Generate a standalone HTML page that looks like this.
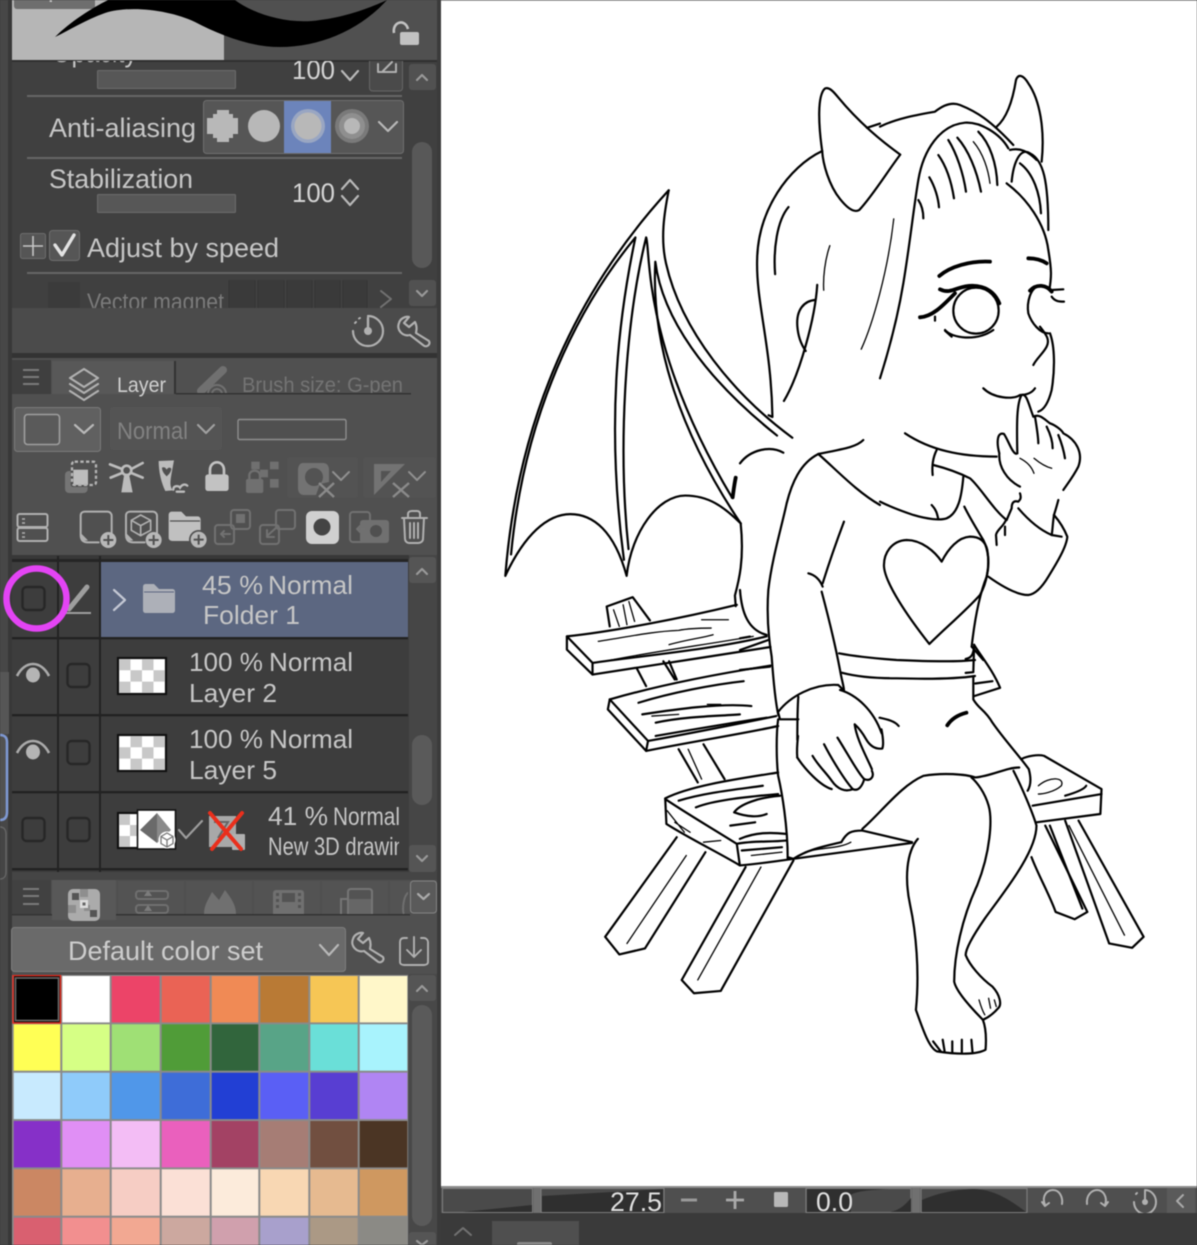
<!DOCTYPE html>
<html><head><meta charset="utf-8"><style>
html,body{margin:0;padding:0;background:#3c3c3c;overflow:hidden}
svg{display:block;position:absolute;left:0;top:0;filter:blur(.55px)}
text{font-family:"Liberation Sans","DejaVu Sans",sans-serif;fill:#c6c6c6;font-size:27px}
.ln path,.ln ellipse{fill:none;stroke:#000;stroke-width:2.2;vector-effect:non-scaling-stroke;stroke-linecap:round;stroke-linejoin:round}
.ln .t{stroke-width:1.3}
.ln .k{stroke-width:3.8}
.ic{fill:none;stroke:#b0b0b0;stroke-width:2;stroke-linecap:round;stroke-linejoin:round}
.dm{fill:none;stroke:#717171;stroke-width:2;stroke-linecap:round;stroke-linejoin:round}
.ch{fill:none;stroke:#b8b8b8;stroke-width:2.2;stroke-linecap:round;stroke-linejoin:round}
.cb{fill:none;stroke:#272727;stroke-width:2.4}
</style></head><body>
<svg width="1197" height="1245" viewBox="0 0 1197 1245" xmlns="http://www.w3.org/2000/svg">
<defs>
<clipPath id="cTop"><rect x="12" y="61" width="425" height="247"/></clipPath>
<clipPath id="cMag"><rect x="40" y="280" width="365" height="28"/></clipPath>
<clipPath id="c3d"><rect x="260" y="830" width="139" height="38"/></clipPath>
<clipPath id="cBar"><rect x="441" y="1189" width="756" height="24"/></clipPath>
<clipPath id="cTab"><rect x="176" y="361" width="235" height="32"/></clipPath>
<clipPath id="cTabs"><rect x="118" y="880" width="290" height="34"/></clipPath>
<clipPath id="cPal"><rect x="12" y="975" width="396" height="270"/></clipPath>
<g id="wr"><path d="M409,317 L404,323 L409,327 L415,322 C418,328 416,331 416,333 L429,341 C431,345 426,348 423,345 L410,335 C403,337 396,330 399,323 C400,319 405,316 409,317Z"/></g>
</defs>

<!-- base -->
<rect width="1197" height="1245" fill="#3b3b3b"/>
<rect x="0" y="0" width="9" height="1245" fill="#474747"/>
<rect x="8" y="0" width="4" height="1245" fill="#383838"/>
<rect x="0" y="672" width="9" height="62" fill="#565656"/>
<path d="M0,735 C5,735 7,738 7,742 L7,812 C7,817 5,820 0,820" fill="#525252" stroke="#7e98d2" stroke-width="2.6"/>
<path d="M0,827 C4,827 6,830 6,834 L6,872 C6,876 4,879 0,879" fill="#454545" stroke="#676767" stroke-width="1.4"/>

<!-- brush preview -->
<rect x="12" y="0" width="425" height="60" fill="#505050"/>
<rect x="12" y="0" width="212" height="60" fill="#b6b6b6"/>
<rect x="14" y="-8" width="81" height="17" rx="3" fill="#6e6e6e"/>
<text x="20" y="-3" style="font-size:24px" textLength="70" lengthAdjust="spacingAndGlyphs">G-pen</text>
<path d="M55,37 C70,22 92,8 108,0 L235,0 C255,15 290,25 320,20 C345,17 370,8 387,0 C360,30 320,47 280,47 C250,47 220,35 195,22 C170,10 130,5 105,13 C85,20 70,30 55,37Z" fill="#000"/>
<path d="M394,33 C392,22 405,18 408,29" fill="none" stroke="#c2c2c2" stroke-width="2.6"/>
<rect x="400" y="32" width="19" height="13" rx="2" fill="#c2c2c2"/>
<rect x="12" y="60" width="425" height="2" fill="#303030"/>

<!-- tool property -->
<rect x="12" y="62" width="425" height="246" fill="#404040"/>
<g clip-path="url(#cTop)">
<text x="52" y="62" textLength="85" lengthAdjust="spacingAndGlyphs">Opacity</text>
<rect x="97.5" y="70.5" width="138" height="18" rx="1" fill="#575757" stroke="#6b6b6b"/>
<text x="292" y="79" textLength="43" lengthAdjust="spacingAndGlyphs" style="fill:#d4d4d4">100</text>
<path class="ch" d="M342,71 L350,80 L358,71"/>
<rect x="369.5" y="50" width="33" height="41" rx="3" fill="#4a4a4a" stroke="#666"/>
<path class="ic" d="M378,64 L378,72 L396,72 L396,64 M383,71 L392,62"/>
</g>
<rect x="409" y="64" width="27" height="26" rx="3" fill="#515151"/>
<path class="ch" d="M417,80 L422,75 L427,80" style="stroke:#999"/>
<rect x="27" y="95" width="375" height="2" fill="#666"/>

<text x="49" y="137" textLength="147" lengthAdjust="spacingAndGlyphs">Anti-aliasing</text>
<rect x="203.5" y="100.5" width="200" height="53" rx="3" fill="#565656" stroke="#6e6e6e"/>
<rect x="284" y="101" width="47" height="52" fill="#6c84bb"/>
<path d="M217,110 h12 v4 h4 v4 h5 v16 h-5 v4 h-4 v4 h-12 v-4 h-4 v-4 h-6 v-16 h6 v-4 h4z" fill="#b8b8b8"/>
<circle cx="264" cy="126" r="16" fill="#b8b8b8"/>
<circle cx="308" cy="126" r="17" fill="#99a6c2"/>
<circle cx="308" cy="126" r="13.5" fill="#b8b8b8"/>
<circle cx="352" cy="126" r="17" fill="#7a7a7a"/>
<circle cx="352" cy="126" r="13" fill="#8f8f8f"/>
<circle cx="352" cy="126" r="8" fill="#b8b8b8"/>
<path class="ch" d="M379,122 L388,131 L397,122"/>
<rect x="27" y="157" width="375" height="2" fill="#666"/>

<text x="49" y="188" textLength="144" lengthAdjust="spacingAndGlyphs">Stabilization</text>
<rect x="97.5" y="194.5" width="138" height="18" rx="1" fill="#575757" stroke="#6b6b6b"/>
<text x="292" y="202" textLength="43" lengthAdjust="spacingAndGlyphs" style="fill:#d4d4d4">100</text>
<path class="ch" d="M342,189 L350,180 L358,189 M342,196 L350,205 L358,196"/>

<rect x="20.5" y="233.5" width="25" height="25" rx="2" fill="#555" stroke="#6d6d6d"/>
<path d="M23,246 H43 M33,236 V256" stroke="#c6c6c6" stroke-width="1.6" fill="none"/>
<rect x="49.5" y="230.5" width="30" height="30" rx="3" fill="#565656" stroke="#6d6d6d"/>
<path d="M55,245 L62,255 L74,235" fill="none" stroke="#e2e2e2" stroke-width="3.4" stroke-linecap="round" stroke-linejoin="round"/>
<text x="87" y="257" textLength="192" lengthAdjust="spacingAndGlyphs">Adjust by speed</text>
<rect x="27" y="272" width="375" height="2" fill="#666"/>

<g clip-path="url(#cMag)">
<rect x="48" y="282" width="32" height="30" fill="#3b3b3b"/>
<text x="87" y="310" textLength="137" lengthAdjust="spacingAndGlyphs" style="fill:#7b7b7b;font-size:24px">Vector magnet</text>
<g fill="#3a3a3a" stroke="#353535"><rect x="229" y="279" width="26" height="32"/><rect x="258" y="279" width="26" height="32"/><rect x="287" y="279" width="25" height="32"/><rect x="315" y="279" width="25" height="32"/><rect x="343" y="279" width="24" height="32"/></g>
</g>
<path class="dm" d="M381,291 L391,299 L381,307"/>
<rect x="412" y="142" width="20" height="126" rx="10" fill="#585858"/>
<rect x="409" y="280" width="27" height="26" rx="3" fill="#515151"/>
<path class="ch" d="M417,291 L422,296 L427,291" style="stroke:#999"/>

<rect x="12" y="308" width="425" height="45" fill="#4b4b4b"/>
<path class="ic" d="M368,316 A15,15 0 1 1 353,331" style="stroke-width:2.2"/>
<path d="M355,323 L356,322 M359,318.5 L360,318" stroke="#b0b0b0" stroke-width="2" stroke-linecap="round"/>
<circle cx="368" cy="331" r="4" fill="#b0b0b0"/><path class="ic" d="M368,331 L368,318" style="stroke-width:2.4"/>
<use href="#wr" class="ic" style="stroke-width:2.2"/>
<rect x="12" y="353" width="425" height="5" fill="#333"/>

<!-- layer panel -->
<rect x="12" y="358" width="425" height="197" fill="#505050"/>
<rect x="12" y="360" width="39" height="34" fill="#3f3f3f"/>
<path d="M23,370 H39 M23,377 H39 M23,384 H39" stroke="#7a7a7a" stroke-width="2"/>
<rect x="52" y="361" width="122" height="33" fill="#585858"/>
<rect x="176" y="361" width="235" height="32" fill="#505050"/>
<rect x="174" y="361" width="2" height="33" fill="#333"/>
<rect x="176" y="393" width="235" height="1.5" fill="#333"/>
<path class="ic" d="M84,369 L98,378 L84,387 L70,378Z M70,384 L84,393 L98,384 M70,391 L84,400 L98,391" style="stroke-width:2.2"/>
<text x="117" y="392" textLength="49" lengthAdjust="spacingAndGlyphs" style="font-size:21px;fill:#d0d0d0">Layer</text>
<g clip-path="url(#cTab)">
<path d="M201,391 L223,370" stroke="#707070" stroke-width="8" stroke-linecap="round"/>
<circle cx="217" cy="394" r="9" fill="none" stroke="#707070" stroke-width="2"/><circle cx="217" cy="394" r="5" fill="none" stroke="#707070" stroke-width="2"/>
<text x="242" y="392" textLength="161" lengthAdjust="spacingAndGlyphs" style="font-size:21px;fill:#747474">Brush size: G-pen</text>
</g>

<rect x="14.5" y="407.5" width="86" height="44" rx="3" fill="#606060" stroke="#7a7a7a"/>
<rect x="24.5" y="414.5" width="35" height="30" rx="3" fill="#5a5a5a" stroke="#9e9e9e" stroke-width="1.6"/>
<path class="ch" d="M75,425 L84,433 L93,425"/>
<rect x="110" y="407" width="112" height="43" rx="3" fill="#545454"/>
<text x="117" y="439" textLength="71" lengthAdjust="spacingAndGlyphs" style="font-size:24px;fill:#828282">Normal</text>
<path class="ch" d="M198,425 L206,433 L214,425" style="stroke:#a0a0a0"/>
<rect x="238" y="419.5" width="108" height="20" rx="1.5" fill="none" stroke="#8e8e8e" stroke-width="1.4"/>

<!-- row 1 icons (frame: 60,455 at 1/3) -->
<g transform="translate(60,455) scale(.3333)">
<rect x="15" y="48" width="68" height="66" rx="12" fill="#757575"/>
<rect x="32" y="30" width="70" height="66" rx="8" fill="#505050"/>
<rect x="40" y="44" width="44" height="46" fill="#bdbdbd"/>
<rect x="36" y="20" width="72" height="70" rx="8" fill="none" stroke="#b4b4b4" stroke-width="7" stroke-dasharray="10 7"/>
<path d="M184,112 L192,62 L208,62 L218,112Z" fill="#bcbcbc"/>
<circle cx="200" cy="46" r="14" fill="none" stroke="#bcbcbc" stroke-width="8"/>
<path d="M150,28 L186,42 M152,68 L186,54 M248,24 L214,42 M248,68 L214,54" stroke="#bcbcbc" stroke-width="8" stroke-linecap="round"/>
<path d="M296,18 L342,16 L334,60 C330,84 330,94 338,106 L316,108 C304,84 296,50 296,18Z" fill="#bcbcbc"/>
<path d="M306,38 C314,34 318,40 320,44 C324,36 332,36 334,42 C332,54 326,58 320,64 C314,58 306,50 306,38Z" fill="#505050"/>
<path d="M340,104 C340,90 356,92 360,98 C366,88 376,86 382,92 M350,110 L372,110" fill="none" stroke="#bcbcbc" stroke-width="7" stroke-linecap="round"/>
<rect x="436" y="58" width="70" height="50" rx="8" fill="#c2c2c2"/>
<path d="M450,60 V46 C450,14 492,14 492,46 V60" fill="none" stroke="#c2c2c2" stroke-width="8"/>
<g fill="#707070"><rect x="574" y="20" width="25" height="23"/><rect x="600" y="44" width="24" height="23"/><rect x="630" y="20" width="26" height="23"/><rect x="630" y="72" width="26" height="26"/><rect x="558" y="72" width="52" height="42" rx="6"/></g>
<path d="M568,74 V62 C568,42 600,42 600,62 V74" fill="none" stroke="#707070" stroke-width="7"/>
</g>
<rect x="287" y="457" width="71" height="41" rx="3" fill="#535353"/>
<rect x="363" y="457" width="73" height="41" rx="3" fill="#535353"/>
<path d="M303,463 H323 C327,463 329,466 329,470 V482 L320,484 L316,495 H304 C300,495 298,492 298,488 V470 C298,466 300,463 303,463Z" fill="#737373"/><circle cx="314" cy="477" r="9" fill="#535353"/>
<path d="M319,483 L334,497 M334,483 L319,497" stroke="#8a8a8a" stroke-width="2.4" fill="none"/>
<path class="dm" d="M333,472 L341,480 L349,472" style="stroke:#8f8f8f"/>
<path d="M374,464 L405,464 L374,495Z" fill="#737373"/><path d="M381,471 L391,471 L381,482Z" fill="#535353"/>
<path d="M393,483 L409,497 M409,483 L393,497" stroke="#8a8a8a" stroke-width="2.4" fill="none"/>
<path class="dm" d="M409,472 L417,480 L425,472" style="stroke:#8f8f8f"/>

<!-- row 2 icons -->
<rect x="17.5" y="514" width="30" height="13" rx="2" class="ic"/><rect x="17.5" y="528" width="30" height="13" rx="2" class="ic"/>
<path d="M22,519 H25 M22,523 H25 M22,533 H25 M22,537 H25" stroke="#b0b0b0" stroke-width="1.6"/>
<g transform="translate(60,455) scale(.3333)">
<path class="ic" style="stroke-width:6" d="M62,240 V182 C62,174 68,170 74,170 H142 C150,170 155,176 155,182 V236 M62,240 C62,256 70,262 84,262 H116"/>
<path d="M64,236 L84,256 L64,258Z" fill="#b0b0b0"/>
<circle cx="145" cy="255" r="24" fill="#b8b8b8"/><path d="M130,255 H160 M145,240 V270" stroke="#505050" stroke-width="6"/>
<path class="ic" style="stroke-width:6" d="M198,240 V182 C198,174 204,170 210,170 H278 C286,170 291,176 291,182 V236 M198,240 C198,256 206,262 220,262 H254"/>
<path d="M200,236 L220,256 L200,258Z" fill="#b0b0b0"/>
<path class="ic" style="stroke-width:5" d="M242,180 L272,196 L272,226 L242,242 L214,226 L214,196Z M214,196 L242,212 L272,196 M242,212 V242"/>
<circle cx="281" cy="255" r="24" fill="#b8b8b8"/><path d="M266,255 H296 M281,240 V270" stroke="#505050" stroke-width="6"/>
<path d="M326,180 C326,174 330,170 336,170 H364 L378,184 H412 C418,184 422,188 422,194 V258 H338 C330,258 326,254 326,248Z" fill="#c0c0c0"/>
<path d="M330,198 H420" stroke="#505050" stroke-width="4"/>
<circle cx="416" cy="254" r="29" fill="#505050"/><circle cx="416" cy="254" r="24" fill="#b8b8b8"/><path d="M401,254 H431 M416,239 V269" stroke="#505050" stroke-width="6"/>
</g>
<rect x="231" y="510" width="19" height="19" rx="3" class="dm"/><rect x="236" y="514" width="9" height="9" fill="#717171"/>
<rect x="215" y="525" width="19" height="19" rx="3" class="dm"/><path class="dm" d="M230,534 H222 M224,531 L221,534 L224,537"/>
<rect x="276" y="510" width="19" height="19" rx="3" class="dm"/>
<rect x="260" y="525" width="19" height="19" rx="3" class="dm"/><path class="dm" d="M277,527 L267,536 M267,530 V537 H274"/>
<rect x="306" y="511" width="33" height="33" rx="6" fill="#d0d0d0"/><circle cx="322" cy="527" r="8.5" fill="#444"/>
<rect x="350" y="512" width="20" height="30" rx="3" class="dm"/><rect x="360" y="520" width="29" height="23" rx="3" fill="#707070"/><circle cx="376" cy="531" r="6" fill="#505050"/><path class="dm" d="M365,529 H357 M360,526 L357,529 L360,532"/>
<path class="ic" d="M402,518 H427 M408,518 V514 C408,512 410,511 412,511 H417 C419,511 420,512 420,514 V518 M404,518 L405,539 C405,541 407,543 409,543 H418 C421,543 423,541 423,539 L424,518 M410,523 V538 M414,523 V538 M418,523 V538"/>
<rect x="12" y="555" width="425" height="5" fill="#383838"/>

<!-- layer list -->
<rect x="12" y="560" width="397" height="310" fill="#3d3d3d"/>
<rect x="409" y="555" width="28" height="318" fill="#464646"/>
<rect x="101" y="562" width="307" height="75" fill="#5c6781"/>
<rect x="12" y="559" width="396" height="3" fill="#252525"/>
<rect x="12" y="637" width="396" height="2.4" fill="#232323"/>
<rect x="12" y="714" width="396" height="2.4" fill="#232323"/>
<rect x="12" y="791" width="396" height="2.4" fill="#232323"/>
<rect x="12" y="868" width="396" height="2.4" fill="#232323"/>
<rect x="57" y="556" width="2" height="316" fill="#232323"/>
<rect x="99" y="556" width="2" height="316" fill="#232323"/>

<!-- rows -->
<rect x="22.5" y="587" width="22" height="23" rx="4" class="cb"/>
<path d="M69,609 L87,587" stroke="#9e9e9e" stroke-width="5" stroke-linecap="round"/>
<path d="M66,613 H91" stroke="#9e9e9e" stroke-width="2"/>
<path d="M114,590 L125,600 L114,610" fill="none" stroke="#c4c8d4" stroke-width="2.2" stroke-linecap="round" stroke-linejoin="round"/>
<path d="M143,587 C143,585 144,584 146,584 H154 L159,589 H172 C174,589 175,590 175,592 V610 C175,612 174,613 172,613 H146 C144,613 143,612 143,610Z" fill="#adb0b8"/>
<path d="M144,592 H174" stroke="#5c6781" stroke-width="1"/>
<text x="202" y="594" textLength="61" lengthAdjust="spacingAndGlyphs" style="font-size:26px">45 %</text>
<text x="268" y="594" textLength="85" lengthAdjust="spacingAndGlyphs" style="font-size:26px">Normal</text>
<text x="203" y="624" textLength="97" lengthAdjust="spacingAndGlyphs" style="font-size:26px">Folder 1</text>

<path d="M17,676 C25,660 41,660 49,676" fill="none" stroke="#aaa" stroke-width="2.6"/><ellipse cx="33" cy="675" rx="7" ry="7.5" fill="#b4b4b4"/>
<rect x="67.5" y="664" width="22" height="23" rx="4" class="cb"/>
<rect x="118" y="658" width="48" height="36" fill="#fff" stroke="#111" stroke-width="2.2"/>
<path fill="#c8c8c8" d="M119,659h11.5v11.3h-11.5z M142,659h11.5v11.3h-11.5z M130.5,670.3h11.5v11.3h-11.5z M153.5,670.3h11.5v11.3h-11.5z M119,681.6h11.5v11.3h-11.5z M142,681.6h11.5v11.3h-11.5z"/>
<text x="189" y="671" textLength="74" lengthAdjust="spacingAndGlyphs" style="font-size:26px">100 %</text>
<text x="269" y="671" textLength="84" lengthAdjust="spacingAndGlyphs" style="font-size:26px">Normal</text>
<text x="189" y="702" textLength="88" lengthAdjust="spacingAndGlyphs" style="font-size:26px">Layer 2</text>

<path d="M17,753 C25,737 41,737 49,753" fill="none" stroke="#aaa" stroke-width="2.6"/><ellipse cx="33" cy="752" rx="7" ry="7.5" fill="#b4b4b4"/>
<rect x="67.5" y="741" width="22" height="23" rx="4" class="cb"/>
<rect x="118" y="735" width="48" height="36" fill="#fff" stroke="#111" stroke-width="2.2"/>
<path fill="#c8c8c8" d="M130.5,736h11.5v11.3h-11.5z M153.5,736h11.5v11.3h-11.5z M119,747.3h11.5v11.3h-11.5z M142,747.3h11.5v11.3h-11.5z M130.5,758.6h11.5v11.3h-11.5z M153.5,758.6h11.5v11.3h-11.5z"/>
<text x="189" y="748" textLength="74" lengthAdjust="spacingAndGlyphs" style="font-size:26px">100 %</text>
<text x="269" y="748" textLength="84" lengthAdjust="spacingAndGlyphs" style="font-size:26px">Normal</text>
<text x="189" y="779" textLength="88" lengthAdjust="spacingAndGlyphs" style="font-size:26px">Layer 5</text>

<rect x="22.5" y="818" width="22" height="23" rx="4" class="cb"/>
<rect x="67.5" y="818" width="22" height="23" rx="4" class="cb"/>
<rect x="118" y="813" width="24" height="35" fill="#fff" stroke="#111" stroke-width="2.2"/>
<path fill="#c8c8c8" d="M119,814h11v11h-11z M130,825h8v11h-8z M119,836h11v11h-11z"/>
<rect x="137.5" y="810" width="38" height="39" fill="#fff" stroke="#111" stroke-width="1.6"/>
<path d="M157,813 L140,830 L157,843Z" fill="#6a6a6a"/><path d="M157,813 L171,830 L157,843Z" fill="#8a8a8a"/>
<circle cx="167" cy="840" r="8.5" fill="#fff"/>
<path d="M167,833 L173,836.5 V843.5 L167,847 L161,843.5 V836.5Z M161,836.5 L167,840 L173,836.5 M167,840 V847" fill="none" stroke="#777" stroke-width="1.3"/>
<path d="M179,830 L186,838 L202,821" fill="none" stroke="#9c9c9c" stroke-width="2.2" stroke-linecap="round" stroke-linejoin="round"/>
<rect x="209" y="816" width="27" height="31" fill="#a8a8a8"/><rect x="232" y="834" width="13" height="16" rx="1" fill="#b0b0b0"/>
<path d="M214,822 L228,822 L218,838" fill="none" stroke="#666" stroke-width="2"/>
<path d="M210,813 L241,849 M242,813 L212,849" stroke="#ea2f1c" stroke-width="4" stroke-linecap="round"/>
<text x="268" y="825" textLength="60" lengthAdjust="spacingAndGlyphs" style="font-size:26px">41 %</text>
<text x="333" y="825" textLength="67" lengthAdjust="spacingAndGlyphs" style="font-size:25px">Normal</text>
<g clip-path="url(#c3d)"><text x="268" y="855" textLength="148" lengthAdjust="spacingAndGlyphs" style="font-size:25px">New 3D drawing</text></g>

<!-- magenta circle -->
<circle cx="36.5" cy="598.5" r="30" fill="none" stroke="#e344f4" stroke-width="6.5"/>

<!-- scrollbar layers -->
<rect x="409" y="557" width="27" height="26" rx="3" fill="#555"/>
<path class="ch" d="M417,574 L422,569 L427,574" style="stroke:#999"/>
<rect x="412" y="735" width="20" height="70" rx="10" fill="#5a5a5a"/>
<rect x="409" y="845" width="27" height="27" rx="3" fill="#555"/>
<path class="ch" d="M417,856 L422,861 L427,856" style="stroke:#999"/>

<rect x="12" y="872" width="425" height="8" fill="#454545"/>

<!-- color panel -->
<rect x="12" y="880" width="425" height="365" fill="#505050"/>
<rect x="12" y="880" width="39" height="35" fill="#414141"/>
<path d="M23,889 H39 M23,896 H39 M23,904 H39" stroke="#7a7a7a" stroke-width="2"/>
<rect x="52" y="880" width="64" height="40" fill="#585858"/>
<rect x="12" y="914" width="40" height="1.5" fill="#333"/>
<rect x="116" y="914" width="294" height="1.5" fill="#333"/>
<g fill="#535353"><rect x="118" y="881" width="66" height="33"/><rect x="186" y="881" width="66" height="33"/><rect x="254" y="881" width="66" height="33"/><rect x="322" y="881" width="66" height="33"/><rect x="390" y="881" width="20" height="33"/></g>
<rect x="68" y="889" width="32" height="32" rx="5" fill="#ababab"/>
<g fill="#555"><rect x="72" y="893" width="7" height="7"/><rect x="90" y="910" width="7" height="7"/></g>
<g fill="#8e8e8e"><rect x="80" y="889" width="8" height="8"/><rect x="68" y="905" width="8" height="8"/><rect x="84" y="905" width="6" height="6"/></g>
<rect x="80" y="900" width="8" height="8" fill="#ddd"/><rect x="82.5" y="902.5" width="3" height="3" fill="#666"/>
<g clip-path="url(#cTabs)">
<g fill="none" stroke="#6f6f6f" stroke-width="2"><rect x="136" y="891" width="32" height="8" rx="3"/><rect x="136" y="905" width="32" height="8" rx="3"/></g>
<path d="M144,896 L148,890 L152,896Z M144,911 L148,905 L152,911Z" fill="#7c7c7c"/>
<path d="M204,914 C204,905 208,900 212,892 L219,900 L225,890 C231,898 236,905 236,914Z" fill="#707070"/>
<rect x="273" y="890" width="31" height="28" rx="3" fill="#707070"/>
<g fill="#535353"><rect x="276" y="893" width="3" height="3"/><rect x="276" y="899" width="3" height="3"/><rect x="276" y="905" width="3" height="3"/><rect x="298" y="893" width="3" height="3"/><rect x="298" y="899" width="3" height="3"/><rect x="298" y="905" width="3" height="3"/><rect x="282" y="893" width="13" height="9"/></g>
<path d="M341,914 V899 H349 M348,914 V892 C348,890 349,889 351,889 H369 C371,889 372,890 372,892 V914" fill="none" stroke="#757575" stroke-width="2"/>
<rect x="349" y="899" width="22" height="15" fill="#666"/>
<path d="M410,892 C403,893 402,912 404,914" stroke="#6f6f6f" stroke-width="2" fill="none"/>
</g>
<rect x="410.5" y="881" width="26" height="32" rx="3" fill="#5a5a5a" stroke="#858585"/>
<path class="ch" d="M418,894 L423.5,899 L429,894" style="stroke:#aaa"/>

<rect x="11.5" y="927.5" width="334" height="44" rx="3" fill="#6a6a6a" stroke="#7e7e7e"/>
<text x="68" y="960" textLength="195" lengthAdjust="spacingAndGlyphs" style="fill:#cdcdcd">Default color set</text>
<path class="ch" d="M320,945 L329,955 L338,945"/>
<use href="#wr" class="ic" transform="translate(-46,616)" style="stroke-width:2.2"/>
<path class="ic" d="M407,938 H404 C401,938 400,940 400,942 V962 C400,964 402,965 404,965 H424 C426,965 428,964 428,962 V942 C428,940 426,938 424,938 H421 M414,937 V956 M407,950 L414,957 L421,950" style="stroke-width:1.9"/>

<!-- palette -->
<g clip-path="url(#cPal)">
<rect x="12" y="974" width="396" height="271" fill="#8a8a8a"/>
<g>
<rect x="14" y="976" width="46.4" height="46.4" fill="#000"/>
<rect x="62.3" y="976" width="47.4" height="46.4" fill="#fff"/>
<rect x="111.7" y="976" width="48" height="46.4" fill="#ec4468"/>
<rect x="161.7" y="976" width="48" height="46.4" fill="#ea6355"/>
<rect x="211.7" y="976" width="46.6" height="46.4" fill="#f08a55"/>
<rect x="260.3" y="976" width="48" height="46.4" fill="#b97a35"/>
<rect x="310.3" y="976" width="47.4" height="46.4" fill="#f6c655"/>
<rect x="359.7" y="976" width="47.6" height="46.4" fill="#fff7c9"/>

<rect x="13.7" y="1024.3" width="46.6" height="46.4" fill="#ffff55"/>
<rect x="62.3" y="1024.3" width="47.4" height="46.4" fill="#d6ff85"/>
<rect x="111.7" y="1024.3" width="48" height="46.4" fill="#9fe075"/>
<rect x="161.7" y="1024.3" width="48" height="46.4" fill="#509c38"/>
<rect x="211.7" y="1024.3" width="46.6" height="46.4" fill="#31653c"/>
<rect x="260.3" y="1024.3" width="48" height="46.4" fill="#58a487"/>
<rect x="310.3" y="1024.3" width="47.4" height="46.4" fill="#6adfd8"/>
<rect x="359.7" y="1024.3" width="47.6" height="46.4" fill="#a8f3fd"/>

<rect x="13.7" y="1072.7" width="46.6" height="46.4" fill="#c8eafe"/>
<rect x="62.3" y="1072.7" width="47.4" height="46.4" fill="#8fcbfa"/>
<rect x="111.7" y="1072.7" width="48" height="46.4" fill="#5097e9"/>
<rect x="161.7" y="1072.7" width="48" height="46.4" fill="#3e6dd8"/>
<rect x="211.7" y="1072.7" width="46.6" height="46.4" fill="#223fd4"/>
<rect x="260.3" y="1072.7" width="48" height="46.4" fill="#5a5ff5"/>
<rect x="310.3" y="1072.7" width="47.4" height="46.4" fill="#583ed2"/>
<rect x="359.7" y="1072.7" width="47.6" height="46.4" fill="#b085f3"/>

<rect x="13.7" y="1121" width="46.6" height="46.4" fill="#8630c8"/>
<rect x="62.3" y="1121" width="47.4" height="46.4" fill="#e08ff5"/>
<rect x="111.7" y="1121" width="48" height="46.4" fill="#f3bdf5"/>
<rect x="161.7" y="1121" width="48" height="46.4" fill="#ea60bd"/>
<rect x="211.7" y="1121" width="46.6" height="46.4" fill="#a34264"/>
<rect x="260.3" y="1121" width="48" height="46.4" fill="#a67d75"/>
<rect x="310.3" y="1121" width="47.4" height="46.4" fill="#714f40"/>
<rect x="359.7" y="1121" width="47.6" height="46.4" fill="#4b3524"/>

<rect x="13.7" y="1169.3" width="46.6" height="46.4" fill="#cb8763"/>
<rect x="62.3" y="1169.3" width="47.4" height="46.4" fill="#e7af8f"/>
<rect x="111.7" y="1169.3" width="48" height="46.4" fill="#f6cdc4"/>
<rect x="161.7" y="1169.3" width="48" height="46.4" fill="#fbe0d6"/>
<rect x="211.7" y="1169.3" width="46.6" height="46.4" fill="#fcebdb"/>
<rect x="260.3" y="1169.3" width="48" height="46.4" fill="#f8d7b3"/>
<rect x="310.3" y="1169.3" width="47.4" height="46.4" fill="#e6ba90"/>
<rect x="359.7" y="1169.3" width="47.6" height="46.4" fill="#cf9860"/>

<rect x="13.7" y="1217.7" width="46.6" height="30" fill="#d96070"/>
<rect x="62.3" y="1217.7" width="47.4" height="30" fill="#f28f8f"/>
<rect x="111.7" y="1217.7" width="48" height="30" fill="#f2a892"/>
<rect x="161.7" y="1217.7" width="48" height="30" fill="#cca89f"/>
<rect x="211.7" y="1217.7" width="46.6" height="30" fill="#d0a0ad"/>
<rect x="260.3" y="1217.7" width="48" height="30" fill="#a8a0cc"/>
<rect x="310.3" y="1217.7" width="47.4" height="30" fill="#ab9985"/>
<rect x="359.7" y="1217.7" width="47.6" height="30" fill="#8b8a85"/>
</g>
<rect x="13" y="975.5" width="47.5" height="47.5" fill="none" stroke="#e8291c" stroke-width="1.4"/>
<rect x="15.5" y="978" width="43" height="42.5" fill="none" stroke="#6a6a6a" stroke-width="1.6"/>
</g>
<rect x="409" y="974" width="28" height="271" fill="#484848"/>
<rect x="409" y="975" width="27" height="26" rx="3" fill="#555"/>
<path class="ch" d="M417,991 L422,986 L427,991" style="stroke:#999"/>
<rect x="412" y="1005" width="20" height="221" rx="10" fill="#5a5a5a"/>
<rect x="409" y="1232" width="27" height="20" rx="3" fill="#555"/>
<path class="ch" d="M417,1241 L422,1245 L427,1241" style="stroke:#999"/>

<!-- canvas -->
<rect x="441" y="0" width="756" height="1187" fill="#fff"/>
<rect x="441" y="0" width="756" height="1" fill="#bbb"/>

<!-- Wing + back hair: zoom5 frame -->
<g class="ln" transform="translate(490,60) scale(.3827,.357)">
<path d="M467,365 C300,560 80,900 40,1445 C90,1330 150,1272 210,1272 C270,1272 325,1320 357,1445 C370,1320 440,1220 510,1220 C570,1220 610,1250 655,1298"/>
<path d="M467,365 C455,430 445,500 460,570 C500,760 640,940 790,1058"/>
<path d="M55,1385 C95,930 270,640 380,497 C340,700 300,1000 350,1400"/>
<path d="M362,1370 C335,1100 350,750 408,497 C420,530 395,800 632,1225"/>
<path d="M655,1298 C500,1050 420,800 432,565 C450,720 560,890 750,1052"/>
<path d="M642,1170 C638,1190 636,1210 634,1225" class="k"/>
<path d="M655,1298 C665,1400 650,1460 640,1500 L642,1530"/>
<path d="M868,255 C780,300 700,420 698,560 C695,680 735,800 738,1000 L728,995"/>
<path d="M780,412 C750,450 740,530 745,600"/>
<path d="M888,520 C875,560 870,610 872,645" class="t"/>
<path d="M1055,445 C1040,590 1000,740 970,810" class="t"/>
<path d="M855,630 C850,720 810,880 768,955"/>
<path d="M850,672 C820,675 800,700 803,745 C805,775 815,800 825,815"/>
<!-- left horn -->
<path d="M868,255 C858,180 855,100 875,80 C885,75 895,85 910,105 C960,170 1020,225 1072,265 C1040,310 1000,380 965,420 C950,430 930,410 915,390 C885,350 870,290 868,255"/>
<path d="M985,190 L1019,178"/>
</g>
<!-- Head and upper hand: zoom8 frame -->
<g class="ln" transform="translate(880,70) scale(.3333)">
<path d="M350,170 C385,140 400,80 408,30 C415,10 430,15 445,40 C480,90 495,180 485,275"/>
<path d="M0,170 C50,145 110,135 165,125 C190,105 215,95 240,105 C290,125 330,150 400,225"/>
<path d="M385,235 C360,190 300,155 255,158 C180,165 130,240 115,330 C100,420 90,520 70,640 C55,730 30,830 0,925"/>
<path d="M395,335 C400,280 420,230 450,250 C490,270 505,330 505,480"/>
<path d="M390,240 C420,232 445,245 470,270"/>
<path d="M420,280 C460,310 480,370 483,430"/>
<path d="M380,340 C440,385 495,460 505,540 C515,600 515,620 508,660"/>
<path d="M175,255 C200,290 215,340 222,385"/>
<path d="M205,210 C230,250 250,310 258,365"/>
<path d="M232,203 C265,240 290,300 303,365"/>
<path d="M280,215 C310,250 325,300 330,340" class="t"/>
<path d="M295,185 C330,220 350,280 352,345"/>
<path d="M148,322 C165,350 175,385 177,412"/>
<path d="M115,390 C125,405 130,425 130,445"/>
<path d="M178,618 C210,590 270,572 330,575" class="k"/>
<path d="M445,565 C465,565 485,570 500,580" class="k"/>
<ellipse cx="288" cy="722" rx="68" ry="69"/>
<path d="M180,658 C200,668 215,662 235,655 C280,640 335,645 358,700" class="k"/>
<path d="M120,742 C160,740 195,700 225,670" class="k"/>
<path d="M165,740 L165,752"/>
<path d="M195,780 C215,805 290,815 340,780"/>
<path d="M195,782 L215,800"/>
<path d="M480,648 C450,650 440,700 445,730 C455,760 480,790 505,790"/>
<path d="M450,662 C470,640 500,645 515,665" class="k"/>
<path d="M515,660 L550,658 M515,680 C525,695 540,695 552,695"/>
<path d="M480,770 C500,795 510,810 500,830 C490,850 470,865 460,885"/>
<path d="M510,790 C525,830 525,900 515,960 C505,1000 490,1020 475,1025"/>
<path d="M310,955 C340,985 400,990 420,975 C440,975 455,970 465,955"/>
<path d="M412,1150 C410,1060 410,1000 425,975 C440,970 445,1000 460,1040"/>
<path d="M412,1150 C400,1160 385,1110 372,1092 C350,1085 350,1120 358,1150 C355,1190 380,1230 420,1250"/>
<path d="M460,1040 C480,1030 495,1050 510,1060 C525,1065 545,1080 550,1090 C590,1110 610,1150 595,1190 C580,1220 560,1245 550,1260"/>
<path d="M465,1040 C470,1070 475,1100 475,1120"/>
<path d="M500,1070 C510,1090 518,1110 518,1135"/>
<path d="M535,1095 C545,1120 552,1145 555,1165"/>
<path d="M420,1165 C440,1175 455,1190 462,1210" class="t"/>
<path d="M462,1165 C480,1180 495,1190 515,1195" class="t"/>
<path d="M75,1090 C150,1140 240,1160 350,1160"/>
</g>
<!-- torso right frame 880,420 -->
<g class="ln" transform="translate(880,420) scale(.3333)">
<path d="M170,90 C160,110 155,135 158,165"/>
<path d="M160,135 C200,145 240,160 270,175 C300,200 340,270 380,300"/>
<path d="M250,170 C245,230 235,280 200,295 C180,302 140,297 100,285 C70,275 30,260 0,245"/>
<path d="M155,255 C170,270 172,285 175,298"/>
<path d="M253,260 C270,295 295,335 310,360 C325,390 330,430 320,470 C300,520 285,590 275,680"/>
<path d="M185,425 C165,395 125,360 80,360 C35,362 10,400 12,440 C15,480 60,560 148,672 C190,630 260,570 300,525 C320,490 330,440 322,390 C315,360 295,350 270,350 C235,352 205,385 185,425Z"/>
<path d="M325,470 C360,495 410,525 445,525 C470,522 490,495 505,470 C530,430 560,380 562,350 C550,320 535,300 522,285"/>
<path d="M415,265 C445,300 480,330 515,345 L545,350"/>
<path d="M522,285 C518,310 518,330 515,345"/>
<path d="M378,300 C370,320 350,330 348,345 L350,375"/>
<path d="M375,320 L375,345"/>
<path d="M420,220 C425,235 420,240 415,245 C400,240 395,250 395,265 L380,300"/>
<path d="M535,240 C530,260 525,275 522,285"/>
<path d="M275,680 L310,720"/>
</g>
<!-- torso left frame 740,440 -->
<g class="ln" transform="translate(740,440) scale(.3333)">
<path d="M0,70 C30,30 90,15 130,38"/>
<path d="M370,0 C350,20 320,25 235,42"/>
<path d="M235,42 C180,70 155,130 140,190 C125,260 95,360 85,450 C80,520 85,590 95,650 C100,720 105,780 115,825"/>
<path d="M235,42 C290,90 350,155 420,195"/>
<path d="M312,245 C295,290 270,360 248,430"/>
<path d="M205,400 C225,405 240,420 248,440"/>
<path d="M245,455 C265,530 285,610 300,690 C305,720 312,740 312,752"/>
<path d="M115,815 C150,770 220,730 295,735 L312,752"/>
<path d="M115,820 L120,838 H175"/>
<path d="M175,770 C172,810 172,860 172,900"/>
<path d="M0,450 C5,520 25,570 80,585"/>
<path d="M0,595 L30,590"/>
<path d="M0,630 L85,600"/>
<path d="M0,690 L90,680"/>
<path d="M300,750 C350,765 400,810 425,880"/>
</g>
<!-- Body + bench: zoom6 frame -->
<g class="ln" transform="translate(560,560) scale(.3827,.332)">
<path d="M620,595 C640,630 680,680 710,690"/>
<path d="M622,530 C620,550 618,570 620,595"/>
<path d="M840,510 C845,540 845,560 842,568 C825,570 810,560 800,540 C790,520 780,505 770,495 C775,540 800,590 815,630"/>
<path d="M815,635 C822,652 812,668 795,660 C780,645 750,580 725,535"/>
<path d="M795,660 C790,680 780,698 765,690 C745,665 710,600 690,555"/>
<path d="M765,690 C745,700 725,690 710,665 C695,640 675,620 660,590"/>
<path d="M835,475 C855,480 875,485 885,500"/>
<path d="M1012,498 C1025,475 1045,465 1062,460" class="k"/>
<path d="M570,480 C565,520 565,600 570,650 C580,700 595,800 595,900"/>
<path d="M595,895 L610,900 C650,870 700,860 735,850 C750,820 760,815 790,815"/>
<path d="M790,810 C840,760 890,680 950,650 C1000,640 1060,645 1085,655 C1130,650 1165,625 1200,625"/>
<path d="M1080,350 L1080,420 C1095,450 1110,450 1130,490 C1160,540 1200,590 1225,630 C1232,660 1230,680 1222,695"/>
<path d="M1060,298 C1075,295 1080,285 1082,260"/>
<path d="M1060,340 L1080,338 L1082,260"/>
<path d="M1082,255 C1100,290 1130,330 1150,385 L1082,410"/>
<path d="M1085,372 L1130,365"/>
<!-- bench back top -->
<path d="M462,135 C320,175 140,215 18,230 L18,270 L85,345 C220,320 400,290 550,262"/>
<path d="M18,230 L85,310 L85,345"/>
<path d="M85,310 C200,290 400,270 540,230"/>
<path d="M130,200 L122,140 L190,112 L235,182"/>
<path d="M140,150 L155,200 M165,135 L175,195 M180,125 L195,185" class="t"/>
<path d="M100,245 C160,235 240,215 310,212 C340,205 370,205 395,205" class="t"/>
<path d="M285,255 C330,240 370,235 400,225 M370,180 L440,180 M130,302 C250,275 380,255 505,230" class="t"/>
<path d="M200,325 L225,380 M270,305 L300,360 M285,305 L305,360"/>
<!-- middle plank -->
<path d="M130,420 C250,380 400,345 550,318"/>
<path d="M130,420 L125,450 L225,575 C330,550 470,525 570,500"/>
<path d="M130,420 L230,545 L225,575"/>
<path d="M230,545 C350,520 480,490 565,470"/>
<path d="M205,430 C290,400 400,375 480,365"/>
<path d="M215,465 C300,450 420,430 500,440"/>
<path d="M250,490 C330,470 420,470 470,465"/>
<path d="M250,530 C350,510 450,490 540,475"/>
<path d="M385,435 L420,435 M240,470 L310,465" class="t"/>
<!-- post -->
<path d="M310,570 L360,670 M375,555 L430,660"/>
<path d="M335,570 L370,660" class="t"/>
<!-- seat -->
<path d="M275,718 C340,680 460,660 570,640"/>
<path d="M275,720 L278,795 C340,840 420,885 470,920 C520,915 580,905 610,900"/>
<path d="M275,720 C340,770 400,810 462,855 L470,920"/>
<path d="M462,855 C500,845 550,850 590,845"/>
<path d="M310,725 C380,700 470,690 530,680"/>
<path d="M355,745 C400,725 470,715 570,705"/>
<path d="M575,710 C520,715 470,735 455,760 C490,775 520,775 540,765"/>
<path d="M445,800 L510,790"/>
<path d="M470,840 C510,820 550,820 590,825"/>
<path d="M475,875 L580,865"/>
<path d="M280,755 L325,820 M300,790 L340,820 M375,850 L420,845 M500,890 L580,880" class="t"/>
<path d="M610,900 L920,852"/>
<path d="M790,815 L920,850"/>
<path d="M640,880 C680,865 730,870 760,850" class="t"/>
<!-- right seat -->
<path d="M1205,600 C1220,590 1250,585 1265,590 L1415,690 L1412,765 L1245,790"/>
<path d="M1235,740 L1415,705"/>
<path d="M1250,680 C1280,650 1320,655 1310,680 C1290,700 1260,705 1250,705" class="t"/>
<path d="M1320,710 C1350,700 1370,690 1375,680"/>
<!-- legs -->
<path d="M305,835 L118,1135 L155,1188 L222,1170 L380,880"/>
<path d="M330,890 L175,1155" class="t"/>
<path d="M485,925 L318,1265 L350,1305 L420,1298 L610,905"/>
<path d="M525,925 L360,1265" class="t"/>
<path d="M1232,895 C1250,950 1280,1010 1295,1060 L1345,1082 L1378,1060 L1268,800"/>
<path d="M1280,800 L1365,1050"/>
<path d="M1355,785 L1525,1135 L1495,1168 L1435,1155 L1320,785"/>
<path d="M1330,800 L1475,1130" class="t"/>
<!-- human legs -->
<path d="M935,840 C905,880 900,960 915,1040 C930,1120 940,1240 930,1355 C950,1420 965,1470 985,1480 C1040,1490 1090,1490 1112,1475 C1115,1430 1110,1400 1105,1385 C1075,1350 1035,1300 1030,1270 C1030,1190 1050,1080 1090,980 C1125,880 1130,780 1120,740 C1110,700 1090,670 1075,655"/>
<path d="M1185,635 C1205,680 1235,760 1245,800 C1245,880 1160,1000 1110,1080 C1080,1130 1060,1170 1060,1190 C1070,1220 1100,1260 1130,1285 C1150,1310 1155,1340 1145,1350 C1130,1370 1115,1380 1105,1385"/>
<path d="M975,1450 L995,1480 M1000,1445 L1005,1480 M1025,1450 L1025,1485 M1050,1445 L1050,1485 M1075,1445 L1078,1485"/>
<path d="M1095,1325 C1100,1345 1105,1360 1110,1370 M1120,1320 L1125,1350 M1135,1325 L1140,1345" class="t"/>
</g>
<!-- belt -->
<g class="ln" transform="translate(740,440) scale(.3333)">
<path d="M297,640 C350,650 400,655 470,660 C580,665 660,665 705,660"/>
<path d="M305,698 C350,710 400,715 470,715 C580,718 660,715 705,708"/>
</g>

<!-- bottom bar -->
<rect x="441" y="1187" width="756" height="26" fill="#4f4f4f"/>
<rect x="441" y="1186" width="756" height="2" fill="#8c8c8c"/>
<g stroke="#7b7b7b" stroke-width="1.2">
<rect x="442.5" y="1188.5" width="90" height="24" fill="#4a4a4a"/>
<rect x="541" y="1188.5" width="123" height="24" fill="#4a4a4a"/>
<rect x="806" y="1188.5" width="105" height="24" fill="#4a4a4a"/>
<rect x="921" y="1188.5" width="106" height="24" fill="#4a4a4a"/>
</g>
<rect x="533.5" y="1188" width="7" height="25" fill="#707070"/>
<rect x="912" y="1188" width="8" height="25" fill="#707070"/>
<path d="M462,1212 L532,1205 L532,1212Z" fill="#2f2f2f"/>
<path d="M542,1196 L663,1189 L663,1212 L542,1212Z" fill="#2f2f2f"/>
<path d="M807,1189 H890 C890,1189 855,1190 851,1195 V1212 H807Z M890,1212 L911,1212 L911,1198 C905,1205 900,1210 890,1212Z" fill="#2f2f2f"/>
<path d="M922,1212 V1200 C940,1192 960,1189 975,1189 C995,1190 1010,1200 1026,1212Z" fill="#2f2f2f"/>
<g clip-path="url(#cBar)">
<text x="610" y="1211" textLength="52" lengthAdjust="spacingAndGlyphs" style="fill:#e0e0e0;font-size:27px">27.5</text>
<text x="816" y="1211" textLength="37" lengthAdjust="spacingAndGlyphs" style="fill:#e0e0e0;font-size:27px">0.0</text>
</g>
<path d="M681,1200 H697" stroke="#999" stroke-width="3"/>
<path d="M726,1200 H744 M735,1191 V1209" stroke="#aaa" stroke-width="2.8"/>
<rect x="774" y="1192" width="14" height="15" rx="1.5" fill="#b8b8b8"/>
<path class="ic" d="M1045,1205 C1041,1195 1048,1190 1053,1190 C1060,1190 1063,1198 1062,1204 M1042,1202 L1045,1206 L1049,1203"/>
<path class="ic" d="M1087,1204 C1086,1195 1092,1190 1097,1190 C1103,1190 1108,1197 1105,1205 M1101,1203 L1105,1206 L1108,1202"/>
<path class="ic" d="M1145,1190 A11,12 0 1 1 1134,1202"/>
<circle cx="1145" cy="1202" r="3" fill="#b0b0b0"/><path class="ic" d="M1145,1202 V1191 M1136,1194 L1137,1193"/>
<rect x="1167" y="1188" width="28" height="25" fill="#5a5a5a"/>
<path class="ic" d="M1183,1195 L1177,1201 L1183,1207" style="stroke:#aaa"/>
<rect x="441" y="1213" width="756" height="32" fill="#3a3a3a"/>
<path class="dm" d="M455,1235 L463,1228 L471,1235"/>
<rect x="492" y="1221" width="87" height="24" fill="#4f4f4f"/>
<rect x="517" y="1242" width="35" height="4" rx="2" fill="#888"/>
</svg>
</body></html>
